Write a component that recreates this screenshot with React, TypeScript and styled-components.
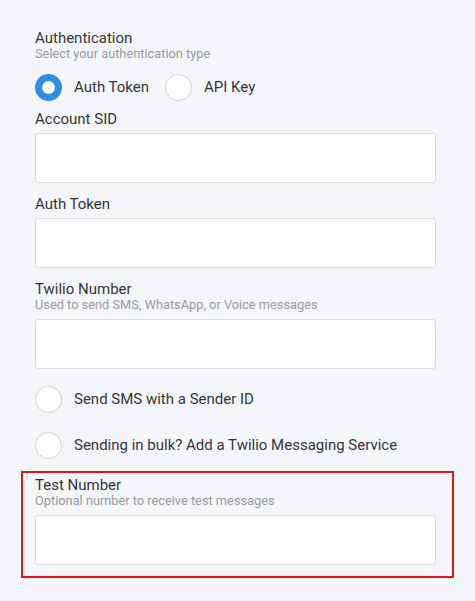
import * as React from 'react';
import styled, { createGlobalStyle } from 'styled-components';

const GlobalStyle = createGlobalStyle`
    html, body {
        margin: 0;
        padding: 0;
        background: #f5f6fa;
    }
    body {
        font-family: Roboto, "Liberation Sans", sans-serif;
        color: #333;
    }
`;

const Form = styled.div`
    display: flex;
    flex-direction: column;
    width: 401px;
    padding: 30px 0 20px 35px;
`;

const Field = styled.div<{ $top?: number }>`
    display: flex;
    flex-direction: column;
    margin-top: ${(p) => p.$top ?? 0}px;
`;

const Label = styled.div`
    font-size: 15px;
    line-height: 17px;
    color: #353535;
`;

const Hint = styled.div`
    font-size: 12.8px;
    line-height: 14px;
    color: #9a9a9a;
`;

const Input = styled.input<{ $top?: number }>`
    box-sizing: border-box;
    height: 50px;
    width: 100%;
    margin: ${(p) => p.$top ?? 5}px 0 0;
    padding: 0 12px;
    background: #fff;
    border: 1px solid #dcdcdc;
    border-radius: 3px;
    font: inherit;
    font-size: 15px;
    outline: none;
`;

const RadioGroup = styled.div<{ $top?: number }>`
    display: flex;
    align-items: center;
    gap: 16px;
    margin-top: ${(p) => p.$top ?? 0}px;
`;

const RadioOption = styled.label`
    display: flex;
    align-items: center;
    gap: 12px;
    font-size: 15px;
    line-height: 17px;
    color: #353535;
    cursor: pointer;
`;

const Circle = styled.span<{ $checked?: boolean }>`
    box-sizing: border-box;
    width: 27px;
    height: 27px;
    border-radius: 50%;
    background: #fff;
    border: ${(p) => (p.$checked ? '7px solid #2e8fe2' : '1px solid #cfcfcf')};
    flex-shrink: 0;
`;

const Highlight = styled.div`
    display: flex;
    flex-direction: column;
    margin: 12px -18px 0 -14px;
    padding: 4px 16px 11px 12px;
    border: 2px solid #e0121b;
`;

type RadioProps = { label: string; checked?: boolean; onClick?: () => void };

const Radio = ({ label, checked, onClick }: RadioProps) => (
    <RadioOption onClick={onClick}>
        <Circle $checked={checked} />
        {label}
    </RadioOption>
);

export default function App() {
    const [auth, setAuth] = React.useState('token');
    const [sender, setSender] = React.useState(false);
    const [bulk, setBulk] = React.useState(false);

    return (
        <>
            <GlobalStyle />
            <Form>
                <Field>
                    <Label>Authentication</Label>
                    <Hint>Select your authentication type</Hint>
                </Field>
                <RadioGroup $top={13}>
                    <Radio label="Auth Token" checked={auth === 'token'} onClick={() => setAuth('token')} />
                    <Radio label="API Key" checked={auth === 'key'} onClick={() => setAuth('key')} />
                </RadioGroup>

                <Field $top={10}>
                    <Label>Account SID</Label>
                    <Input />
                </Field>

                <Field $top={13}>
                    <Label>Auth Token</Label>
                    <Input />
                </Field>

                <Field $top={13}>
                    <Label>Twilio Number</Label>
                    <Hint>Used to send SMS, WhatsApp, or Voice messages</Hint>
                    <Input $top={7} />
                </Field>

                <RadioGroup $top={17}>
                    <Radio label="Send SMS with a Sender ID" checked={sender} onClick={() => setSender(!sender)} />
                </RadioGroup>
                <RadioGroup $top={19}>
                    <Radio label="Sending in bulk? Add a Twilio Messaging Service" checked={bulk} onClick={() => setBulk(!bulk)} />
                </RadioGroup>

                <Highlight>
                    <Label>Test Number</Label>
                    <Hint>Optional number to receive test messages</Hint>
                    <Input $top={7} />
                </Highlight>
            </Form>
        </>
    );
}
